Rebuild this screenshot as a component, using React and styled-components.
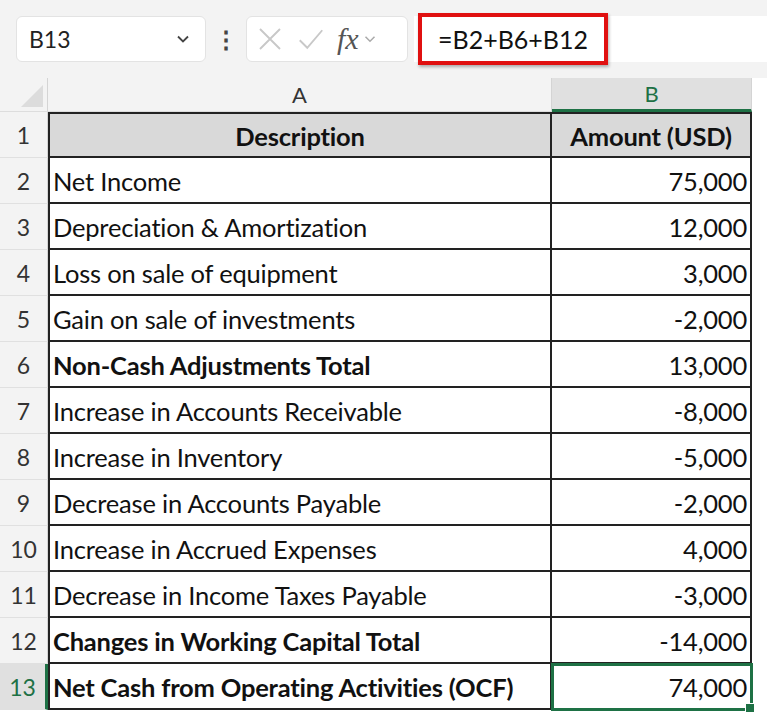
import styled, { createGlobalStyle } from 'styled-components'

const Global = createGlobalStyle`
  body { margin: 0; background: #fff; font-family: Lato, "Open Sans", sans-serif; }
`

const Page = styled.div`
  width: 767px;
  height: 722px;
  overflow: hidden;
  background: #fff;
`

const Toolbar = styled.div`
  height: 78px;
  background: #f3f3f3;
  display: flex;
  align-items: center;
  padding-left: 16px;
  gap: 6px;
  box-sizing: border-box;
`

const NameBox = styled.div`
  width: 190px;
  height: 46px;
  background: #fff;
  border: 1px solid #e3e3e3;
  border-radius: 6px;
  display: flex;
  align-items: center;
  justify-content: space-between;
  padding: 0 12px 0 12px;
  box-sizing: border-box;
  font-size: 23px;
  color: #222;
`

const Dots = styled.div`
  width: 28px;
  text-align: center;
  font-size: 24px;
  font-weight: bold;
  color: #444;
`

const FxBox = styled.div`
  width: 162px;
  height: 46px;
  background: #fff;
  border: 1px solid #e3e3e3;
  border-radius: 6px;
  display: flex;
  align-items: center;
  gap: 10px;
  padding-left: 8px;
  box-sizing: border-box;
`

const Fx = styled.span`
  font-family: "Liberation Serif", serif;
  font-style: italic;
  font-size: 30px;
  color: #555;
  margin-right: -8px;
`

const FormulaBar = styled.div`
  flex: 1;
  height: 46px;
  background: #fff;
  display: flex;
  align-items: center;
  padding-left: 4px;
`

const RedBox = styled.div`
  width: 190px;
  height: 52px;
  border: 4px solid #e01010;
  box-sizing: border-box;
  display: flex;
  align-items: center;
  padding-left: 16px;
  font-size: 25px;
  color: #111;
  box-shadow: 1px 2px 3px rgba(0,0,0,0.3);
`

const Grid = styled.div`
  display: grid;
  grid-template-columns: 48px 504px 200px 15px;
  grid-template-rows: 34px repeat(13, 46px);
`

const ColHead = styled.div`
  background: ${p => (p.$sel ? '#e0e0e0' : '#f3f3f3')};
  color: ${p => (p.$sel ? '#1e7145' : '#333')};
  border-bottom: ${p => (p.$sel ? '3px solid #1e7145' : '1px solid #ddd')};
  border-right: 1px solid #d4d4d4;
  display: flex;
  align-items: center;
  justify-content: center;
  font-size: 22px;
  box-sizing: border-box;
`

const Corner = styled.div`
  background: #f3f3f3;
  border-right: 1px solid #d4d4d4;
  border-bottom: 1px solid #ddd;
  position: relative;
  &::after {
    content: '';
    position: absolute;
    right: 4px;
    bottom: 4px;
    border-left: 22px solid transparent;
    border-bottom: 22px solid #dcdcdc;
  }
`

const RowHead = styled.div`
  background: ${p => (p.$sel ? '#e0e0e0' : '#f3f3f3')};
  color: ${p => (p.$sel ? '#1e7145' : '#333')};
  border-right: ${p => (p.$sel ? '3px solid #1e7145' : '1px solid #d4d4d4')};
  border-bottom: 1px solid #e0e0e0;
  display: flex;
  align-items: center;
  justify-content: center;
  font-size: 23px;
  box-sizing: border-box;
`

const Cell = styled.div`
  background: ${p => (p.$head ? '#d9d9d9' : '#fff')};
  border-right: 2px solid #222;
  border-bottom: 2px solid #222;
  border-left: ${p => (p.$first ? '2px solid #222' : 'none')};
  border-top: ${p => (p.$top ? '2px solid #222' : 'none')};
  display: flex;
  align-items: center;
  justify-content: ${p => (p.$head ? 'center' : p.$num ? 'flex-end' : 'flex-start')};
  padding: 2px 3px 0;
  font-size: 25.5px;
  letter-spacing: -0.2px;
  font-weight: ${p => (p.$bold || p.$head ? 'bold' : 'normal')};
  color: #111;
  box-sizing: border-box;
  position: relative;
  white-space: nowrap;
  outline: ${p => (p.$sel ? '3px solid #1e7145' : 'none')};
  outline-offset: -2px;
`

const Handle = styled.span`
  position: absolute;
  right: -5px;
  bottom: -5px;
  width: 8px;
  height: 8px;
  background: #1e7145;
  border: 1px solid #fff;
`

const Filler = styled.div`
  background: #fff;
`

const rows = [
  ['Net Income', '75,000'],
  ['Depreciation & Amortization', '12,000'],
  ['Loss on sale of equipment', '3,000'],
  ['Gain on sale of investments', '-2,000'],
  ['Non-Cash Adjustments Total', '13,000', true],
  ['Increase in Accounts Receivable', '-8,000'],
  ['Increase in Inventory', '-5,000'],
  ['Decrease in Accounts Payable', '-2,000'],
  ['Increase in Accrued Expenses', '4,000'],
  ['Decrease in Income Taxes Payable', '-3,000'],
  ['Changes in Working Capital Total', '-14,000', true],
  ['Net Cash from Operating Activities (OCF)', '74,000', true],
]

const Chevron = () => (
  <svg width="20" height="20" viewBox="0 0 24 24" fill="none" stroke="#444" strokeWidth="2.2">
    <path d="M6 9l6 6 6-6" />
  </svg>
)

export default function App() {
  return (
    <Page>
      <Global />
      <Toolbar>
        <NameBox>B13<Chevron /></NameBox>
        <Dots>⋮</Dots>
        <FxBox>
          <svg width="30" height="30" viewBox="0 0 24 24" stroke="#c8c8c8" strokeWidth="1.5">
            <path d="M4 4l16 16M20 4L4 20" />
          </svg>
          <svg width="32" height="30" viewBox="0 0 24 24" fill="none" stroke="#c8c8c8" strokeWidth="1.5">
            <path d="M3 13l6 6L21 5" />
          </svg>
          <Fx>fx</Fx>
          <svg width="18" height="18" viewBox="0 0 24 24" fill="none" stroke="#aaa" strokeWidth="2">
            <path d="M6 9l6 6 6-6" />
          </svg>
        </FxBox>
        <FormulaBar>
          <RedBox>=B2+B6+B12</RedBox>
        </FormulaBar>
      </Toolbar>
      <Grid>
        <Corner />
        <ColHead>A</ColHead>
        <ColHead $sel>B</ColHead>
        <Filler />
        <RowHead>1</RowHead>
        <Cell $head $first $top>Description</Cell>
        <Cell $head $top>Amount (USD)</Cell>
        <Filler />
        {rows.map(([d, v, b], i) => {
          const last = i === rows.length - 1
          return [
            <RowHead key={'h' + i} $sel={last}>{i + 2}</RowHead>,
            <Cell key={'a' + i} $first $bold={b}>{d}</Cell>,
            <Cell key={'b' + i} $num $sel={last}>{v}{last && <Handle />}</Cell>,
            <Filler key={'f' + i} />,
          ]
        })}
      </Grid>
    </Page>
  )
}
